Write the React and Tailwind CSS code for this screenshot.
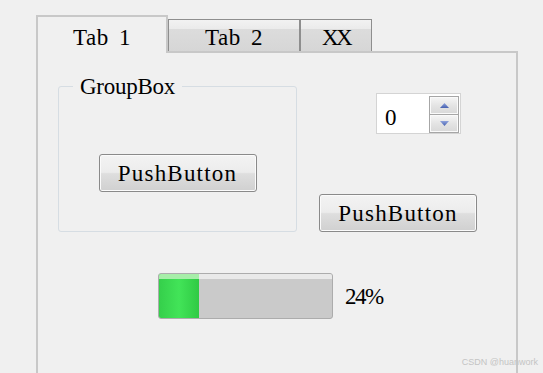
import React from "react";

const font = { fontFamily: '"Liberation Serif", "Times New Roman", serif' };

function PushButton() {
  return (
    <div className="w-[158px] h-[38px] border border-[#8a8a8a] rounded-[3px] bg-[linear-gradient(to_bottom,#f3f3f3_0%,#ececec_48%,#dedede_52%,#d0d0d0_100%)] shadow-[inset_0_0_0_1px_#fbfbfb] flex items-center justify-center text-[23px] leading-none text-black tracking-[1.2px]">
      PushButton
    </div>
  );
}

function Arrow({ up }) {
  return (
    <svg width="9" height="5" viewBox="0 0 9 5">
      <defs>
        <linearGradient id={up ? "ga" : "gb"} x1="0" y1="0" x2="0" y2="1">
          <stop offset="0" stopColor="#8fa3dc" />
          <stop offset="1" stopColor="#4761b0" />
        </linearGradient>
      </defs>
      <polygon points={up ? "4.5,0 9,5 0,5" : "0,0 9,0 4.5,5"} fill={`url(#${up ? "ga" : "gb"})`} />
    </svg>
  );
}

export default function App() {
  return (
    <div
      className="w-[543px] h-[373px] bg-[#f0f0f0] relative overflow-hidden pl-[36px] pt-[15px]"
      style={font}
    >
      {/* Tab bar */}
      <div className="flex items-end h-[36px]">
        <div className="relative z-10 w-[132px] h-[38px] -mb-[2px] self-start border-2 border-b-0 border-[#c8c8c8] bg-[#f0f0f0] flex justify-center pt-[9px] text-[23px] leading-none text-black tracking-[0.5px] [word-spacing:4px]">
          Tab 1
        </div>
        <div className="w-[132px] h-[32px] border border-b-0 border-[#8e8e8e] bg-[linear-gradient(to_bottom,#f2f2f2_0%,#ebebeb_28%,#dcdcdc_30%,#d6d6d6_100%)] flex justify-center pt-[6px] text-[23px] leading-none text-black tracking-[0.5px] [word-spacing:4px]">
          Tab 2
        </div>
        <div className="w-[72px] h-[32px] border border-b-0 border-[#8e8e8e] bg-[linear-gradient(to_bottom,#f2f2f2_0%,#ebebeb_28%,#dcdcdc_30%,#d6d6d6_100%)] flex justify-center pt-[6px] text-[23px] leading-none text-black tracking-[-2.5px]">
          XX
        </div>
      </div>

      {/* Pane */}
      <div className="w-[482px] h-[330px] border-2 border-[#c8c8c8] pt-[33px] pl-[20px]">
        <div className="flex items-start">
          {/* GroupBox */}
          <div className="relative w-[239px] h-[146px] border border-[#d6dde3] rounded-[3px] flex justify-center pt-[67px]">
            <div className="absolute left-[14px] top-[-12px] px-[7px] bg-[#f0f0f0] text-[23px] leading-none text-black tracking-[-0.25px]">
              GroupBox
            </div>
            <PushButton />
          </div>

          {/* Right column */}
          <div className="ml-[22px] flex flex-col">
            <div className="ml-[57px] mt-[7px] w-[85px] h-[41px] border border-[#d4d4d4] bg-white flex items-start">
              <div className="pl-[8px] pt-[12px] text-[23px] leading-none text-black">0</div>
              <div className="ml-auto mt-[2px] mr-[1px] w-[30px] h-[37px] border border-[#a6a6a6] flex flex-col">
                <div className="h-[18px] border-b border-[#a6a6a6] bg-[linear-gradient(to_bottom,#f6f6f6,#e4e4e4_50%,#d8d8d8)] shadow-[inset_0_0_0_1px_#fafafa] flex items-center justify-center">
                  <Arrow up />
                </div>
                <div className="flex-1 bg-[linear-gradient(to_bottom,#f6f6f6,#e4e4e4_50%,#d8d8d8)] shadow-[inset_0_0_0_1px_#fafafa] flex items-center justify-center">
                  <Arrow />
                </div>
              </div>
            </div>
            <div className="mt-[60px]">
              <PushButton />
            </div>
          </div>
        </div>

        {/* Progress */}
        <div className="mt-[41px] ml-[100px] flex items-center gap-[12px]">
          <div className="relative w-[175px] h-[46px] border border-[#acacac] rounded-[3px] bg-[#cacaca] overflow-hidden flex">
            <div className="absolute inset-x-0 top-0 h-[5px] bg-[#e9e9e9]" />
            <div className="relative w-[40px] h-full bg-[linear-gradient(to_right,#35cf4b,#42e458_50%,#2fca44)]">
              <div className="absolute inset-x-0 top-0 h-[5px] bg-[#a7eea9]" />
            </div>
          </div>
          <div className="text-[23px] leading-none text-black tracking-[-1.5px]">24%</div>
        </div>
      </div>

      <div
        className="absolute right-[5px] bottom-[6px] text-[9px] leading-none text-[#c4c4c4]"
        style={{ fontFamily: '"Liberation Sans", Arial, sans-serif' }}
      >
        CSDN @huanwork
      </div>
    </div>
  );
}
